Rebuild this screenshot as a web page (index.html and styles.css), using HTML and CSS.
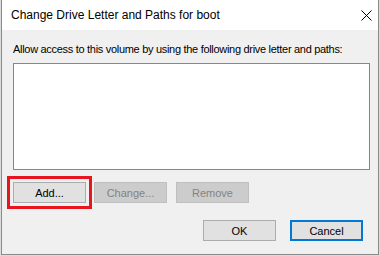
FILE: index.html
```html
<!DOCTYPE html>
<html>
<head>
<meta charset="utf-8">
<link rel="stylesheet" href="styles.css">
</head>
<body>
<div class="window">
  <div class="titlebar">
    <span class="title">Change Drive Letter and Paths for boot</span>
    <svg class="close" width="11" height="11" viewBox="0 0 11 11"><path d="M0.5 0.5 L10.5 10.5 M10.5 0.5 L0.5 10.5" stroke="#000" stroke-width="1" fill="none"/></svg>
  </div>
  <div class="content">
    <div class="label">Allow access to this volume by using the following drive letter and paths:</div>
    <div class="listbox"></div>
    <div class="actions">
      <div class="highlight"><button class="btn">Add...</button></div>
      <button class="btn disabled">Change...</button>
      <button class="btn disabled">Remove</button>
    </div>
    <div class="footer">
      <button class="btn">OK</button>
      <button class="btn default">Cancel</button>
    </div>
  </div>
</div>
</body>
</html>
```
FILE: styles.css
```css
* { box-sizing: border-box; }
html, body { margin: 0; padding: 0; }
body {
  width: 380px; height: 256px;
  background: #dcdcdc;
  font-family: "Liberation Sans", Arial, sans-serif;
  font-size: 11px;
  color: #000;
  overflow: hidden;
}
.window {
  margin-left: 1px;
  width: 378px;
  height: 255px;
  border: 1px solid #8a8a8a;
  border-top: none;
  background: #f0f0f0;
  display: flex;
  flex-direction: column;
}
.titlebar {
  height: 30px;
  background: #fff;
  display: flex;
  align-items: center;
  justify-content: space-between;
  padding: 0 6px 0 9px;
}
.title { font-size: 12px; }
.close { margin-top: 1px; }
.content {
  display: flex;
  flex-direction: column;
  padding: 12px 0 0 11px;
}
.label {
  line-height: 15px;
  white-space: nowrap;
  letter-spacing: -0.3px;
}
.listbox {
  margin-top: 6px;
  width: 357px;
  height: 107px;
  background: #fff;
  border: 1px solid #828790;
}
.actions {
  margin-top: 6px;
  display: flex;
  align-items: center;
  margin-left: -6px;
}
.highlight {
  border: 3px solid #e8141e;
  padding: 3px;
  margin-right: 2px;
}
.btn {
  width: 73px;
  height: 21px;
  background: #e1e1e1;
  border: 1px solid #adadad;
  font-family: inherit;
  font-size: 11px;
  color: #000;
  padding: 0;
  margin: 0;
}
.actions .disabled + .disabled { margin-left: 9px; }
.disabled {
  background: #cccccc;
  border-color: #bfbfbf;
  color: #838383;
}
.footer {
  margin-top: 11px;
  display: flex;
  padding-left: 190px;
  gap: 14px;
}
.default {
  border: 2px solid #0078d7;
}
```
